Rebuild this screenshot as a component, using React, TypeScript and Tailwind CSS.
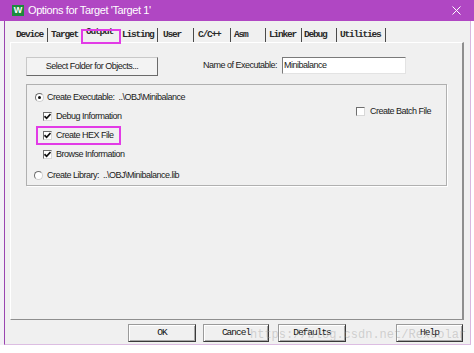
import React from "react"

const tabs = [
  { label: "Device", cls: "w-[36px] pl-[4px] border-r border-[#4a4a4a]" },
  { label: "Target", cls: "w-[33px] pl-[3px]" },
  { label: "Output", cls: "w-[40px] pl-[5px]", active: true },
  { label: "Listing", cls: "w-[37px] pl-[1px] border-r border-[#4a4a4a]" },
  { label: "User", cls: "w-[36px] pl-[5px] border-r border-[#4a4a4a]" },
  { label: "C/C++", cls: "w-[37px] pl-[4px] border-r border-[#4a4a4a]" },
  { label: "Asm", cls: "w-[35px] pl-[3px] border-r border-[#4a4a4a]" },
  { label: "Linker", cls: "w-[36px] pl-[3px] border-r border-[#4a4a4a]" },
  { label: "Debug", cls: "w-[35px] pl-[2px] border-r border-[#4a4a4a]" },
  { label: "Utilities", cls: "w-[49px] pl-[3px] border-r border-[#4a4a4a]" },
]

function Check({ on }: { on?: boolean }) {
  return (
    <span className="w-[9px] h-[9px] shrink-0 bg-white border border-t-[#6e6e6e] border-l-[#6e6e6e] border-r-[#d8d8d8] border-b-[#d8d8d8] flex items-center justify-center">
      {on && (
        <svg width="7" height="7" viewBox="0 0 7 7">
          <path d="M0.5 3.2 L2.6 5.3 L6.5 1" stroke="#111" strokeWidth="1.7" fill="none" />
        </svg>
      )}
    </span>
  )
}

function Radio({ on }: { on?: boolean }) {
  return (
    <span className="w-[9px] h-[9px] shrink-0 rounded-full bg-white border border-t-[#6e6e6e] border-l-[#6e6e6e] border-r-[#d0d0d0] border-b-[#d0d0d0] flex items-center justify-center">
      {on && <span className="w-[3px] h-[3px] rounded-full bg-[#111]" />}
    </span>
  )
}

function WinButton({ label, cls }: { label: string; cls: string }) {
  return (
    <div className={`${cls} h-[18px] flex items-center justify-center bg-[#f0f0f0] border border-t-[#9a9a9a] border-l-[#9a9a9a] border-r-[#3a3a3a] border-b-[#3a3a3a] shadow-[inset_1px_1px_0_#fff,inset_-1px_-1px_0_#a8a8a8] font-['Liberation_Mono',monospace] text-[9.5px] tracking-[-1px] text-[#111]`}>
      {label}
    </div>
  )
}

export default function App() {
  const sans = "font-['Liberation_Sans',Arial,sans-serif] text-[9px] tracking-[-0.5px] text-[#1a1a1a] whitespace-nowrap"
  return (
    <div className="relative w-[474px] h-[353px] bg-white overflow-hidden flex flex-col">
      {/* title bar */}
      <div className="h-[21px] shrink-0 bg-[#b047c3] flex items-center pl-[12px] pr-[13px]">
        <div className="w-[12px] h-[11px] bg-[#1d8a3c] flex items-center justify-center text-white text-[9px] font-bold leading-none font-['Liberation_Sans',sans-serif]">
          W
        </div>
        <span className="ml-[4px] text-white text-[11px] tracking-[-0.4px] font-['Liberation_Sans',Arial,sans-serif] whitespace-nowrap">
          Options for Target 'Target 1'
        </span>
        <svg className="ml-auto" width="9" height="9" viewBox="0 0 9 9">
          <path d="M0.5 0.5 L8.5 8.5 M8.5 0.5 L0.5 8.5" stroke="#fff" strokeWidth="1" />
        </svg>
      </div>

      <div className="flex h-[324px] shrink-0">
        <div className="w-[4px] bg-[#f3f1f6]" />
        {/* dialog body */}
        <div className="w-[467px] h-[324px] bg-[#f0f0f0] border-l border-l-[#9a45b0] border-r border-r-[#d9b6df] border-b border-b-[#dcbde2] flex flex-col">
          {/* tabs */}
          <div className="mt-[7px] h-[14px] pl-[7px] flex font-['Liberation_Mono',monospace] font-bold text-[9.5px] tracking-[-1.2px] text-[#2a2a2a]">
            {tabs.map((t) => (
              <div key={t.label} className={`${t.cls} h-[14px] relative shrink-0 whitespace-nowrap leading-[14px]`}>
                {t.active ? (
                  <>
                    <span className="block -translate-y-[3px]">{t.label}</span>
                    <span className="absolute left-0 top-[1px] w-[40px] h-[15px] border-2 border-[#e23be6] z-10" />
                  </>
                ) : (
                  t.label
                )}
              </div>
            ))}
          </div>

          {/* tab panel */}
          <div className="ml-[5px] w-[454px] h-[278px] border-t border-l border-t-white border-l-white border-r-2 border-r-[#8e8e8e] border-b border-b-[#8e8e8e] flex flex-col">
            <div className="mt-[14px] ml-[15px] flex items-start">
              <div className={`w-[132px] h-[19px] flex items-center justify-center bg-[#f3f3f3] border border-t-[#c8c8c8] border-l-[#c8c8c8] border-r-[#6a6a6a] border-b-[#6a6a6a] ${sans}`}>
                Select Folder for Objects...
              </div>
              <div className={`ml-[45px] w-[79px] h-[17px] flex items-center ${sans}`}>Name of Executable:</div>
              <div className={`w-[124px] h-[17px] bg-white border border-t-[#7a7a7a] border-l-[#7a7a7a] border-r-[#e3e3e3] border-b-[#e3e3e3] flex items-center pl-[1px] ${sans}`}>
                Minibalance
              </div>
            </div>

            {/* group box */}
            <div className="mt-[8px] ml-[15px] w-[421px] h-[102px] border border-[#b0b0b0] shadow-[1px_1px_0_#fff] flex">
              <div className="pt-[3px] flex flex-col">
                <div className="h-[19px] pl-[8px] flex items-center">
                  <Radio on />
                  <span className={`ml-[3px] ${sans}`}>Create Executable:&nbsp; ..\OBJ\Minibalance</span>
                </div>
                <div className="h-[19px] pl-[16px] flex items-center">
                  <Check on />
                  <span className={`ml-[4px] ${sans}`}>Debug Information</span>
                </div>
                <div className="h-[19px] pl-[16px] flex items-center relative">
                  <span className="absolute left-[9px] top-[0px] w-[85px] h-[19px] border-2 border-[#e23be6]" />
                  <Check on />
                  <span className={`ml-[4px] ${sans}`}>Create HEX File</span>
                </div>
                <div className="h-[19px] pl-[16px] flex items-center">
                  <Check on />
                  <span className={`ml-[4px] ${sans}`}>Browse Information</span>
                </div>
                <div className="mt-[2px] h-[19px] pl-[7px] flex items-center">
                  <Radio />
                  <span className={`ml-[4px] ${sans}`}>Create Library:&nbsp; ..\OBJ\Minibalance.lib</span>
                </div>
              </div>
              <div className="ml-auto pt-[22px] pr-[15px]">
                <div className="h-[9px] flex items-center">
                  <Check />
                  <span className={`ml-[5px] ${sans}`}>Create Batch File</span>
                </div>
              </div>
            </div>
          </div>

          {/* bottom buttons */}
          <div className="mt-[4px] ml-[123px] flex">
            <WinButton label="OK" cls="w-[68px]" />
            <WinButton label="Cancel" cls="ml-[7px] w-[66px]" />
            <WinButton label="Defaults" cls="ml-[9px] w-[68px]" />
            <WinButton label="Help" cls="ml-[50px] w-[67px]" />
          </div>
        </div>
      </div>

      {/* csdn watermark */}
      <span className="absolute left-[250px] top-[326px] font-['Liberation_Mono',monospace] text-[12px] text-[#9a9a9a]/40 whitespace-nowrap pointer-events-none">
        https://blog.csdn.net/Rexcolar
      </span>
    </div>
  )
}
